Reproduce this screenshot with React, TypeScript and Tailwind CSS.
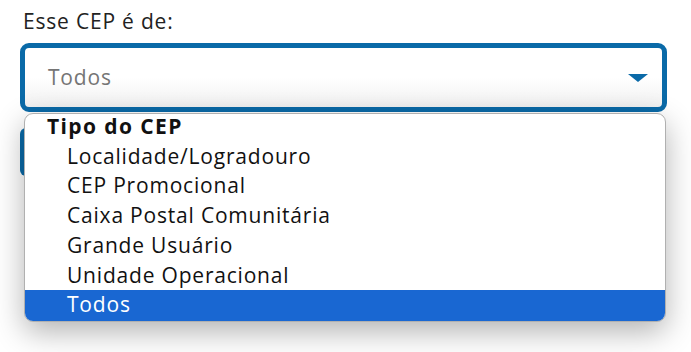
const options = [
  "Localidade/Logradouro",
  "CEP Promocional",
  "Caixa Postal Comunitária",
  "Grande Usuário",
  "Unidade Operacional",
  "Todos",
];

const App = () => {
  return (
    <main className="relative w-[691px] h-[352px] bg-white overflow-hidden font-['Open_Sans',sans-serif] text-[21px] tracking-[0.8px]">
      <div className="pl-[23px] pt-[6px] h-[43px] text-[#222] leading-[30px]">Esse CEP é de:</div>
      <div className="ml-[20px] w-[647px] h-[69px] rounded-[9px] border-[5px] border-[#0a6aa8] bg-gradient-to-b from-white via-white to-[#f1f1f1] flex items-center justify-between pl-[23px] pr-[14px]">
        <span className="text-[#757575]">Todos</span>
        <svg width="20" height="8" viewBox="0 0 20 8">
          <polygon points="0,0 20,0 10,8" fill="#0a6aa8" />
        </svg>
      </div>
      <div className="ml-[20px] mt-[16px] w-[200px] h-[48px] rounded-[6px] bg-[#0a6aa8]" />

      <div className="absolute left-[24px] top-[113px] w-[642px] h-[209px] rounded-[9px] border-[1.5px] border-[#b0b0b0] bg-white overflow-hidden shadow-[0_10px_30px_rgba(0,0,0,0.3)] text-[#111] leading-[29.7px]">
        <div className="pl-[22px] font-bold tracking-[1.4px] -mt-[2px] h-[29.7px]">Tipo do CEP</div>
        {options.map((o) =>
          o === "Todos" ? (
            <div key={o} className="pl-[42px] bg-[#1967d2] text-white h-[32px]">{o}</div>
          ) : (
            <div key={o} className="pl-[42px]">{o}</div>
          )
        )}
      </div>
    </main>
  );
};

export default App;
